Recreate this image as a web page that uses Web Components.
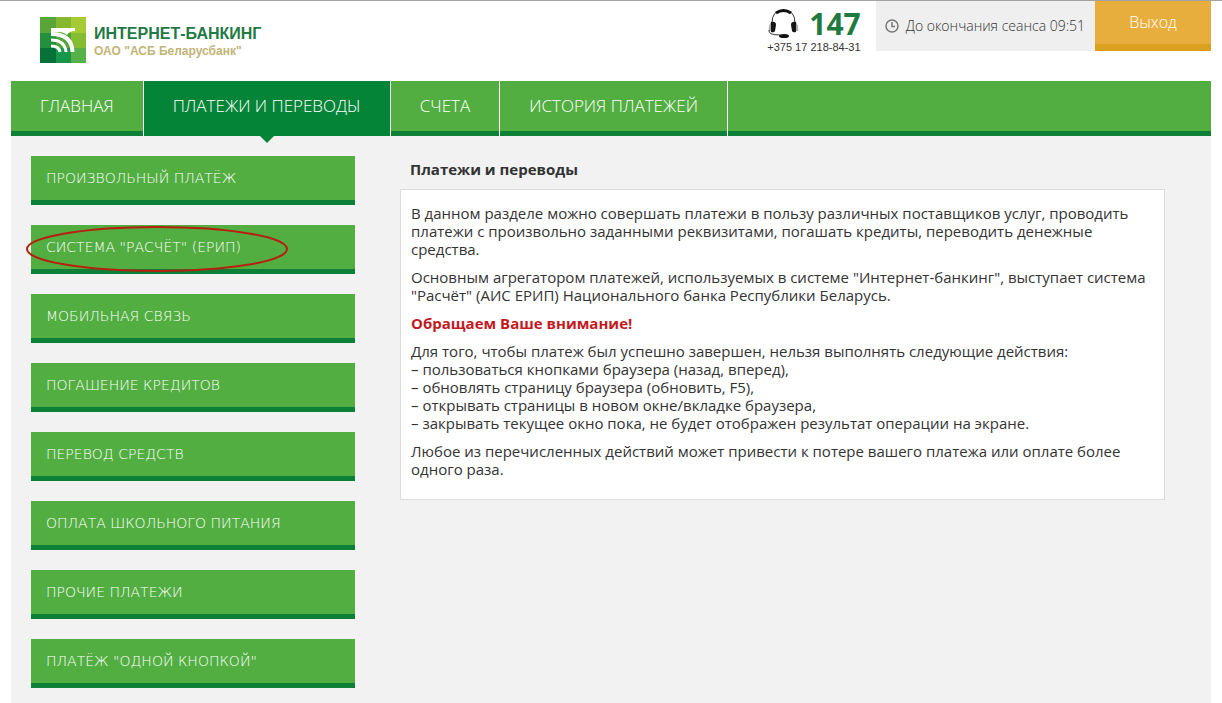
<!DOCTYPE html>
<html lang="ru">
<head>
<meta charset="utf-8">
<meta name="viewport" content="width=device-width, initial-scale=1">
<title>Интернет-банкинг</title>
<style>
html {
    --green: #53ae42;
    --green-dark: #0c8036;
    --green-active: #038437;
    --page: #f2f2f2;
}
body {
    margin: 0;
    min-height: 100vh;
    box-sizing: border-box;
    display: flex;
    flex-direction: column;
    border-top: 1px solid #a3a3a3;
    padding: 0 11px;
    background: #fff;
    color: #333;
    font: 15px/18px 'Open Sans', 'Noto Sans', sans-serif;
}
p {
    margin: 0 0 10px;
}
.warning {
    color: #c41a1f;
}
</style>
</head>
<body>

<bank-header>
    <bank-logo slot="logo" name="ИНТЕРНЕТ-БАНКИНГ" owner='ОАО "АСБ Беларусбанк"'></bank-logo>
    <bank-phone short="147" full="+375 17 218-84-31"></bank-phone>
    <bank-session time="09:51"></bank-session>
</bank-header>

<bank-nav>
    <bank-tab>ГЛАВНАЯ</bank-tab>
    <bank-tab active>ПЛАТЕЖИ И ПЕРЕВОДЫ</bank-tab>
    <bank-tab>СЧЕТА</bank-tab>
    <bank-tab>ИСТОРИЯ ПЛАТЕЖЕЙ</bank-tab>
</bank-nav>

<bank-content>
    <bank-menu slot="menu">
        <bank-menu-item>ПРОИЗВОЛЬНЫЙ ПЛАТЁЖ</bank-menu-item>
        <bank-menu-item marked>СИСТЕМА "РАСЧЁТ" (ЕРИП)</bank-menu-item>
        <bank-menu-item>МОБИЛЬНАЯ СВЯЗЬ</bank-menu-item>
        <bank-menu-item>ПОГАШЕНИЕ КРЕДИТОВ</bank-menu-item>
        <bank-menu-item>ПЕРЕВОД СРЕДСТВ</bank-menu-item>
        <bank-menu-item>ОПЛАТА ШКОЛЬНОГО ПИТАНИЯ</bank-menu-item>
        <bank-menu-item>ПРОЧИЕ ПЛАТЕЖИ</bank-menu-item>
        <bank-menu-item>ПЛАТЁЖ "ОДНОЙ КНОПКОЙ"</bank-menu-item>
    </bank-menu>
    <bank-panel heading="Платежи и переводы">
        <p>В данном разделе можно совершать платежи в пользу различных поставщиков услуг, проводить платежи с произвольно заданными реквизитами, погашать кредиты, переводить денежные средства.</p>
        <p>Основным агрегатором платежей, используемых в системе "Интернет-банкинг", выступает система "Расчёт" (АИС ЕРИП) Национального банка Республики Беларусь.</p>
        <p class="warning"><strong>Обращаем Ваше внимание!</strong></p>
        <p>Для того, чтобы платеж был успешно завершен, нельзя выполнять следующие действия:<br>
        – пользоваться кнопками браузера (назад, вперед),<br>
        – обновлять страницу браузера (обновить, F5),<br>
        – открывать страницы в новом окне/вкладке браузера,<br>
        – закрывать текущее окно пока, не будет отображен результат операции на экране.</p>
        <p>Любое из перечисленных действий может привести к потере вашего платежа или оплате более одного раза.</p>
    </bank-panel>
</bank-content>

<script>
class Base extends HTMLElement {
    constructor() {
        super();
        this.attachShadow({mode: 'open'});
        this.shadowRoot.innerHTML = this.template();
    }
}

// page header

class Header extends Base {
    template() {
        return `
            <style>
            :host {
                display: flex;
                align-items: flex-start;
                height: 80px;
            }
            .logo {
                flex: 1;
                padding: 16px 0 0 29px;
            }
            </style>
            <div class="logo"><slot name="logo"></slot></div>
            <slot></slot>
        `;
    }
}

class Logo extends Base {
    template() {
        return `
            <style>
            :host {
                display: block;
                font-family: 'Liberation Sans', Arial, sans-serif;
                font-weight: bold;
            }
            a {
                display: inline-flex;
                align-items: flex-start;
                gap: 8px;
                color: #1f7a45;
                text-decoration: none;
            }
            svg {
                display: block;
            }
            .text {
                padding-top: 8px;
            }
            .name {
                font-size: 16px;
                line-height: 18px;
            }
            .owner {
                font-size: 12px;
                line-height: 16px;
                color: #c3b478;
            }
            </style>
            <a href="#">
                <svg width="46" height="46" viewBox="0 0 46 46" aria-hidden="true">
                    <path fill="#5aa537" d="M0 0h16v16H0z"/>
                    <path fill="#86b82f" d="M16 0h15v16H16z"/>
                    <path fill="#a6cb35" d="M31 0h15v16H31z"/>
                    <path fill="#23913c" d="M0 16h16v15H0z"/>
                    <path fill="#4fa53a" d="M16 16h15v15H16z"/>
                    <path fill="#84bd32" d="M31 16h15v15H31z"/>
                    <path fill="#077238" d="M0 31h16v15H0z"/>
                    <path fill="#17974a" d="M16 31h15v15H16z"/>
                    <path fill="#55b148" d="M31 31h15v15H31z"/>
                    <path fill="#fff" d="M11 11h24v3q-6 0-8 4q-6-4-9-3H11z"/>
                    <g fill="none" stroke="#fff">
                        <path stroke-width="4" d="M11 17q21 0 21.500 18"/>
                        <path stroke-width="3" d="M11 23q14 0 15 12"/>
                        <path stroke-width="3" d="M11 29q8 0 9 6"/>
                    </g>
                </svg>
                <div class="text">
                    <div class="name"></div>
                    <div class="owner"></div>
                </div>
            </a>
        `;
    }
    connectedCallback() {
        this.shadowRoot.querySelector('.name').textContent = this.getAttribute('name');
        this.shadowRoot.querySelector('.owner').textContent = this.getAttribute('owner');
    }
}

class Phone extends Base {
    template() {
        return `
            <style>
            :host {
                display: block;
                padding: 6px 15px 0 0;
            }
            .top {
                display: flex;
                align-items: center;
                gap: 9px;
                height: 33px;
            }
            svg {
                display: block;
            }
            .short {
                font-size: 30px;
                font-weight: bold;
                line-height: 32px;
                color: #1f7a40;
            }
            .full {
                font: 11px/14px 'Liberation Sans', Arial, sans-serif;
                color: #333;
            }
            </style>
            <div class="top">
                <svg width="33" height="32" viewBox="0 0 33 32" aria-hidden="true">
                    <path fill="none" stroke="#333" d="M5 15Q5 2 16.500 2T28 15"/>
                    <path fill="none" stroke="#111" stroke-width="3" d="M9 5q7.500-5 15 0"/>
                    <path fill="#aaa" d="M4 14q-3 4-2 9h3V13zM29 14q3 4 2 9h-3V13z"/>
                    <path fill="#161616" d="M4 14q5-1 5 3l-1 6q-1 2-4 1zM29 14q-5-1-5 3l1 6q1 2 4 1z"/>
                    <path fill="none" stroke="#333" d="M2 22q-1 5 11 5"/>
                    <ellipse cx="17" cy="28" rx="5" ry="2" fill="#111"/>
                </svg>
                <span class="short"></span>
            </div>
            <div class="full"></div>
        `;
    }
    connectedCallback() {
        this.shadowRoot.querySelector('.short').textContent = this.getAttribute('short');
        this.shadowRoot.querySelector('.full').textContent = this.getAttribute('full');
    }
}

class Session extends Base {
    template() {
        return `
            <style>
            :host {
                display: flex;
                height: 50px;
            }
            .left {
                display: flex;
                align-items: center;
                gap: 7px;
                padding: 0 10px 0 9px;
                background: #efeff0;
                color: #333;
                font-size: 14px;
                font-weight: 300;
                white-space: nowrap;
            }
            svg {
                display: block;
            }
            button {
                width: 116px;
                border: 0;
                border-bottom: 7px solid #dba01f;
                padding: 0 0 2px;
                background: #e7ae3e;
                color: #fff;
                font: 300 16px/20px 'Open Sans', sans-serif;
                cursor: pointer;
            }
            </style>
            <div class="left">
                <svg width="14" height="14" viewBox="0 0 14 14" fill="none" stroke="#777" stroke-width="1.500" aria-hidden="true">
                    <circle cx="7" cy="7" r="6"/>
                    <path d="M7 3v4.500H10"/>
                </svg>
                <span>До окончания сеанса <time></time></span>
            </div>
            <button type="button">Выход</button>
        `;
    }
    connectedCallback() {
        this.shadowRoot.querySelector('time').textContent = this.getAttribute('time');
    }
}


// main navigation

class Nav extends Base {
    template() {
        return `
            <style>
            :host {
                display: block;
                background: var(--green);
                box-shadow: inset 0 -5px var(--green-dark);
            }
            nav {
                display: flex;
            }
            </style>
            <nav><slot></slot></nav>
        `;
    }
}

class Tab extends Base {
    template() {
        return `
            <style>
            :host {
                position: relative;
                display: block;
                border-right: 1px solid #fff;
            }
            a {
                display: block;
                padding: 13px 29px 18px;
                color: #fff;
                font-size: 17px;
                font-weight: 300;
                line-height: 24px;
                text-decoration: none;
                white-space: nowrap;
            }
            :host([active]) {
                background: var(--green-active);
            }
            /* pointer below the current tab */
            :host([active])::after {
                content: '';
                position: absolute;
                top: 100%;
                left: 50%;
                margin-left: -7px;
                border: 7px solid transparent;
                border-top-color: var(--green-active);
                border-bottom: 0;
            }
            </style>
            <a href="#"><slot></slot></a>
        `;
    }
}


// content area

class Content extends Base {
    template() {
        return `
            <style>
            :host {
                flex: 1;
                display: flex;
                align-items: flex-start;
                gap: 45px;
                padding: 20px 46px 15px 20px;
                background: var(--page);
            }
            aside {
                flex: 2 1 0;
                min-width: 0;
                max-width: 324px;
            }
            main {
                flex: 4 1 0;
                min-width: 0;
            }
            </style>
            <aside><slot name="menu"></slot></aside>
            <main><slot></slot></main>
        `;
    }
}

class Menu extends Base {
    template() {
        return `
            <style>
            :host {
                display: flex;
                flex-direction: column;
                gap: 20px;
            }
            </style>
            <slot></slot>
        `;
    }
}

class MenuItem extends Base {
    template() {
        return `
            <style>
            :host {
                position: relative;
                display: block;
            }
            a {
                display: block;
                border-bottom: 5px solid var(--green-dark);
                padding: 12px;
                padding-left: 15px;
                background: var(--green);
                color: #fff;
                font: 200 14px/20px 'DejaVu Sans', 'DejaVu Sans Light', sans-serif;
                text-decoration: none;
            }
            svg {
                display: none;
                position: absolute;
                top: 0;
                left: -5px;
                pointer-events: none;
            }
            :host([marked]) svg {
                display: block;
            }
            </style>
            <a href="#"><slot></slot></a>
            <svg width="264" height="48" viewBox="0 0 264 48" aria-hidden="true">
                <ellipse cx="131" cy="24" rx="130" ry="22" fill="none" stroke="#b5200f" stroke-width="2"/>
            </svg>
        `;
    }
}

class Panel extends Base {
    template() {
        return `
            <style>
            :host {
                display: block;
            }
            h1 {
                margin: 0;
                padding: 4px 10px 11px;
                font-size: 15px;
                line-height: 18px;
            }
            .box {
                border: 1px solid #dcdcdc;
                padding: 14px 10px 11px;
                background: #fff;
            }
            </style>
            <h1></h1>
            <div class="box"><slot></slot></div>
        `;
    }
    connectedCallback() {
        this.shadowRoot.querySelector('h1').textContent = this.getAttribute('heading');
    }
}

customElements.define('bank-header', Header);
customElements.define('bank-logo', Logo);
customElements.define('bank-phone', Phone);
customElements.define('bank-session', Session);
customElements.define('bank-nav', Nav);
customElements.define('bank-tab', Tab);
customElements.define('bank-content', Content);
customElements.define('bank-menu', Menu);
customElements.define('bank-menu-item', MenuItem);
customElements.define('bank-panel', Panel);
</script>
</body>
</html>
